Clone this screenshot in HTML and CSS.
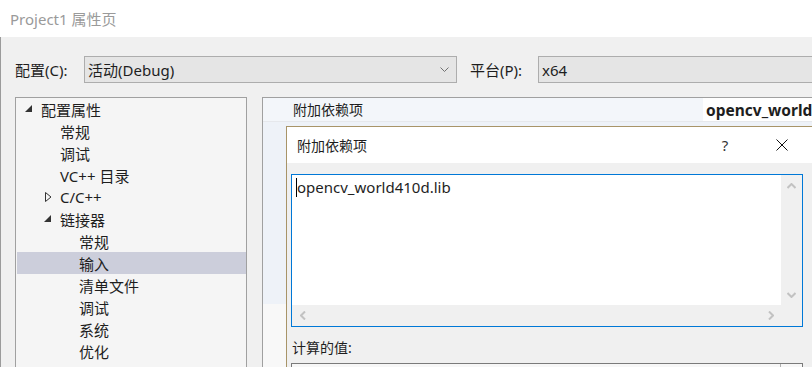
FILE: index.html
```html
<!DOCTYPE html>
<html lang="zh-CN">
<head>
  <meta charset="UTF-8" />
  <title>Project1 属性页</title>
  <link rel="stylesheet" href="styles.css">
</head>
<body>
  <div class="titlebar">Project1 属性页</div>

  <div class="window">
    <div class="config-row">
      <label class="config-label">配置(C):</label>
      <div class="combo config-combo">
        <span>活动(Debug)</span>
        <svg width="9" height="5" viewBox="0 0 9 5"><polyline points="0.5,0.5 4.5,4.5 8.5,0.5" fill="none" stroke="#707070" stroke-width="1"/></svg>
      </div>
      <label class="platform-label">平台(P):</label>
      <div class="combo platform-combo">x64</div>
    </div>

    <div class="panes">
      <ul class="tree">
        <li class="lvl1"><span class="twisty"><svg width="8" height="8" viewBox="0 0 8 8"><polygon points="7,0 7,7 0,7" fill="#333"/></svg></span>配置属性</li>
        <li class="lvl2"><span class="twisty"></span>常规</li>
        <li class="lvl2"><span class="twisty"></span>调试</li>
        <li class="lvl2"><span class="twisty"></span>VC++ 目录</li>
        <li class="lvl2"><span class="twisty"><svg class="closed" width="7" height="10" viewBox="0 0 7 10"><polygon points="0.5,0.5 6,5 0.5,9.5" fill="none" stroke="#333"/></svg></span>C/C++</li>
        <li class="lvl2"><span class="twisty"><svg width="8" height="8" viewBox="0 0 8 8"><polygon points="7,0 7,7 0,7" fill="#333"/></svg></span>链接器</li>
        <li class="lvl3"><span class="twisty"></span>常规</li>
        <li class="lvl3 selected"><span class="twisty"></span>输入</li>
        <li class="lvl3"><span class="twisty"></span>清单文件</li>
        <li class="lvl3"><span class="twisty"></span>调试</li>
        <li class="lvl3"><span class="twisty"></span>系统</li>
        <li class="lvl3"><span class="twisty"></span>优化</li>
      </ul>

      <div class="grid">
        <div class="grid-head">
          <div class="grid-name">附加依赖项</div>
          <div class="grid-value">opencv_world</div>
        </div>
        <div class="grid-rows"></div>

        <!-- modal editor for the selected property -->
        <div class="dialog">
          <div class="dialog-title">
            <span class="caption">附加依赖项</span>
            <span class="help-btn">?</span>
            <span class="close-btn">
              <svg width="12" height="12" viewBox="0 0 12 12"><path d="M0.5 0.5 L11.5 11.5 M11.5 0.5 L0.5 11.5" stroke="#111" stroke-width="1"/></svg>
            </span>
          </div>
          <div class="dialog-body">
            <div class="editor">
              <div class="editor-text"><span class="caret"></span>opencv_world410d.lib</div>
              <div class="vscroll">
                <span class="arrow"><svg width="9" height="6" viewBox="0 0 9 6"><polyline points="0.5,5 4.5,1 8.5,5" fill="none" stroke="#c2c2c2" stroke-width="2"/></svg></span>
                <span class="arrow"><svg width="9" height="6" viewBox="0 0 9 6"><polyline points="0.5,1 4.5,5 8.5,1" fill="none" stroke="#c2c2c2" stroke-width="2"/></svg></span>
              </div>
              <div class="hscroll">
                <span class="arrow"><svg width="6" height="9" viewBox="0 0 6 9"><polyline points="5,0.5 1,4.5 5,8.5" fill="none" stroke="#c2c2c2" stroke-width="2"/></svg></span>
                <span class="arrow"><svg width="6" height="9" viewBox="0 0 6 9"><polyline points="1,0.5 5,4.5 1,8.5" fill="none" stroke="#c2c2c2" stroke-width="2"/></svg></span>
              </div>
              <div class="corner"></div>
            </div>
            <div class="computed-label">计算的值:</div>
            <div class="computed-box"><div class="computed-scroll"></div></div>
          </div>
        </div>
      </div>
    </div>
  </div>
</body>
</html>
```

FILE: styles.css
```css
* {
  box-sizing: border-box;
}

body {
  margin: 0;
  width: 812px;
  height: 367px;
  overflow: hidden;
  font-family: "Segoe UI", "Noto Sans", "Noto Sans CJK SC", sans-serif;
  font-size: 15px;
  color: #1e1e1e;
  background: #f0f0f0;
}

.titlebar {
  height: 37px;
  background: #ffffff;
  color: #9a9a9a;
  padding: 1px 0 0 10px;
  line-height: 37px;
}

.window {
  border-left: 1px solid #9b9b9b;
  height: 330px;
  overflow: hidden;
}

.config-row {
  display: flex;
  align-items: center;
  padding: 19px 0 0 14px;
  height: 46px;
}

.config-label {
  width: 69px;
  flex: none;
}

.combo {
  height: 27px;
  background: #e5e5e5;
  border: 1px solid #adadad;
  display: flex;
  align-items: center;
  padding-left: 3px;
}

.config-combo {
  width: 373px;
  flex: none;
  justify-content: space-between;
  padding-right: 7px;
}

.platform-label {
  margin-left: 13px;
  width: 68px;
  flex: none;
}

.platform-combo {
  flex: 1;
  margin-right: -10px;
}

.panes {
  display: flex;
  gap: 15px;
  margin-top: 14px;
  padding-left: 14px;
  height: 290px;
}

/* tree on the left */
.tree {
  width: 232px;
  flex: none;
  margin: 0;
  padding: 0;
  list-style: none;
  background: #f5f5f5;
  border: 1px solid #a0a0a0;
}

.tree li {
  height: 22px;
  display: flex;
  align-items: center;
  margin-left: 1px;
  white-space: nowrap;
}

.tree li.lvl1 { padding-left: 8px; }
.tree li.lvl2 { padding-left: 27px; }
.tree li.lvl3 { padding-left: 46px; }

.tree li.selected {
  background: #cccedb;
}

.twisty {
  width: 16px;
  flex: none;
  display: flex;
  align-items: center;
}

.twisty svg.closed {
  margin-left: 1px;
}

/* property grid */
.grid {
  flex: 1;
  min-width: 0;
  position: relative;
  background: #f8f8f8;
  border: 1px solid #a0a0a0;
  border-right: none;
  border-bottom: none;
}

.grid-head {
  display: flex;
  height: 24px;
  line-height: 24px;
  background: #f3f6fa;
  border-bottom: 1px solid #e6e8ec;
}

.grid-name {
  width: 440px;
  flex: none;
  padding-left: 30px;
  font-size: 14px;
}

.grid-value {
  flex: 1;
  min-width: 0;
  background: #ffffff;
  font-weight: bold;
  font-size: 15.5px;
  padding-left: 3px;
  white-space: nowrap;
  overflow: hidden;
}

.grid-rows {
  height: 182px;
  background: #eef2f8;
}

/* dialog */
.dialog {
  position: absolute;
  left: 23px;
  top: 28px;
  width: 540px;
  height: 270px;
  background: #f0f0f0;
  border: 1px solid #a89468;
}

.dialog-title {
  height: 36px;
  background: #ffffff;
  display: flex;
  align-items: center;
  padding: 0 20px 0 10px;
  font-size: 14px;
}

.caption {
  flex: 1;
}

.help-btn,
.close-btn {
  width: 46px;
  display: flex;
  justify-content: center;
  font-size: 15px;
  color: #333;
}

.help-btn {
  margin-right: 11px;
}

.dialog-body {
  padding: 11px 0 0 4px;
}

.editor {
  width: 512px;
  height: 153px;
  border: 1px solid #0078d7;
  display: grid;
  grid-template-columns: 1fr 21px;
  grid-template-rows: 1fr 21px;
}

.editor-text {
  background: #ffffff;
  padding: 2px 0 0 4px;
  line-height: 20px;
  font-size: 15px;
  color: #1e1e1e;
}

.caret {
  display: inline-block;
  width: 1px;
  height: 19px;
  background: #000;
  vertical-align: -4px;
}

.vscroll,
.hscroll,
.corner {
  background: #f0f0f0;
  display: flex;
  justify-content: space-between;
}

.vscroll {
  flex-direction: column;
}

.arrow {
  width: 21px;
  height: 21px;
  display: flex;
  align-items: center;
  justify-content: center;
}

.computed-label {
  margin: 11px 0 0 1px;
  line-height: 20px;
  font-size: 14px;
}

.computed-box {
  margin-top: 5px;
  width: 512px;
  height: 40px;
  background: #f7f7f7;
  border: 1px solid #7a7a7a;
  display: flex;
  justify-content: flex-end;
}

.computed-scroll {
  width: 22px;
  border-left: 1px solid #b0b0b0;
}
```
